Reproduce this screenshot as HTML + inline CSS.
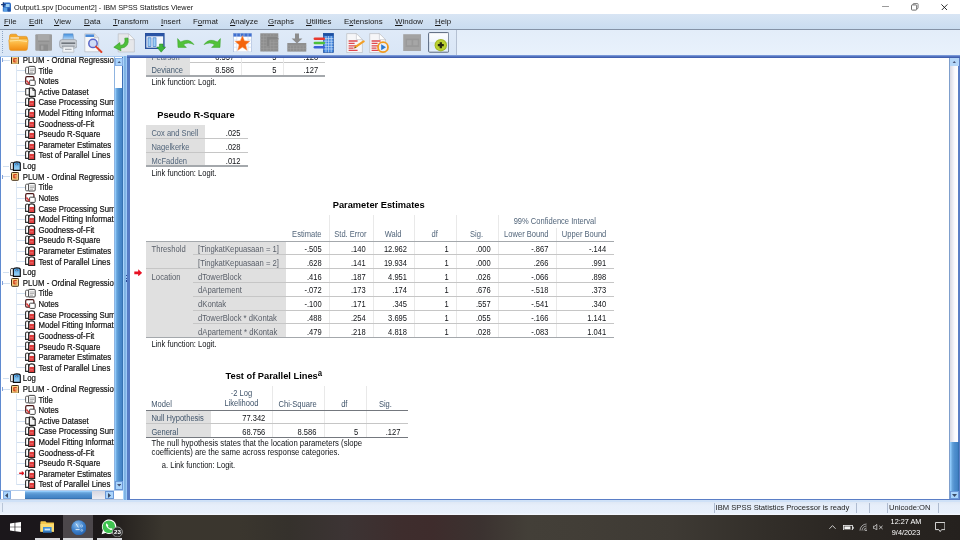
<!DOCTYPE html>
<html><head><meta charset="utf-8"><title>Output1.spv [Document2] - IBM SPSS Statistics Viewer</title>
<style>
*{box-sizing:border-box;margin:0;padding:0}
html,body{width:960px;height:540px;overflow:hidden;background:#fff;font-family:"Liberation Sans",sans-serif}
body{position:relative}
.abs,.abs *{position:absolute}
#title{position:absolute;left:0;top:0;width:960px;height:14px;background:#fff}
#title .t{position:absolute;left:14px;top:3px;font-size:7.3px;line-height:10px;color:#111;white-space:nowrap}
#menu{position:absolute;left:0;top:14px;width:960px;height:15px;background:linear-gradient(#d8e5f4,#c9dcf0)}
#menu span{position:absolute;top:3.1px;font-size:7.9px;line-height:10px;color:#1a1a1a;white-space:nowrap}
#menu u{text-decoration:underline;text-underline-offset:0.5px}
#mline{position:absolute;left:0;top:28.8px;width:960px;height:1.1px;background:#8492a6}
#tool{position:absolute;left:0;top:30px;width:960px;height:26px;background:linear-gradient(#e3edf9,#e9f2fc)}
#tool .tb{position:absolute;left:0;top:0;width:457px;height:26px;background:linear-gradient(#dfeaf8,#d9e6f6);border-right:1px solid #b4c0d2}
#tool svg{position:absolute}
/* left pane */
#lp{position:absolute;left:0;top:56px;width:114px;height:434px;background:#fff;overflow:hidden}
.tr{position:absolute;left:0;height:10px;width:200px;white-space:nowrap}
.tr span{position:absolute;top:1.1px;font-size:7.8px;line-height:10px;color:#111;white-space:nowrap;transform:scaleY(1.1);-webkit-text-stroke:0.18px #111}
.tr .ic{position:absolute;top:0}
.tr .hl{position:absolute;top:4.8px;height:0.9px;background:#d2e0f0}
.vl{position:absolute;left:15.6px;width:0.9px;background:#dde7f3}
#vl{position:absolute;left:16px;top:0;width:1px;height:435px;background:#b5cde3}
#vl0{position:absolute;left:2px;top:0;width:1px;height:435px;background:#b5cde3}
#root{position:absolute;left:0;top:0;width:960px;height:540px;overflow:hidden;will-change:transform;filter:blur(0.35px)}
</style></head><body><div id="root">
<div id="title"><span class="t">Output1.spv [Document2] - IBM SPSS Statistics Viewer</span><svg style="position:absolute;left:1px;top:2px" width="10.4" height="10" viewBox="0 0 10.4 10"><path d="M3.2 0.6H8.4Q10 0.8 10 2.6V9.6H1.8V6z" fill="#2d6cc4"/><path d="M4.6 2H8.6V5H4.6z" fill="#9fd0f4"/><path d="M2.6 5.6H6.4V9.6H2.6z" fill="#5aa0e4"/><path d="M6.6 6.4H9.4V9.6H6.6z" fill="#1f4f9f"/><path d="M2.4 0.3V4.9M0.1 2.6H4.7" stroke="#163a7c" stroke-width="1.3"/></svg>
<svg style="position:absolute;left:882.4px;top:6.2px" width="7" height="1.2" viewBox="0 0 7 1.2"><rect width="7" height="1.1" fill="#9a9a9a"/></svg>
<svg style="position:absolute;left:911px;top:3px" width="7.6" height="7.6" viewBox="0 0 7.6 7.6"><rect x="0.5" y="1.9" width="5.2" height="5.2" rx="0.8" fill="#fff" stroke="#5a5a5a" stroke-width="0.9"/><path d="M2 1.9V1.2Q2 0.5 2.8 0.5H6.4Q7.1 0.5 7.1 1.2V4.8Q7.1 5.6 6.4 5.6H5.8" fill="none" stroke="#6a6a6a" stroke-width="0.8"/></svg>
<svg style="position:absolute;left:940.8px;top:3.6px" width="6.8" height="6.8" viewBox="0 0 6.8 6.8"><path d="M0.4 0.4L6.4 6.4M6.4 0.4L0.4 6.4" stroke="#1a1a1a" stroke-width="0.9"/></svg>
</div>
<div id="menu"><span style="left:4px"><u>F</u>ile</span><span style="left:29px"><u>E</u>dit</span><span style="left:54px"><u>V</u>iew</span><span style="left:84px"><u>D</u>ata</span><span style="left:113px"><u>T</u>ransform</span><span style="left:161px"><u>I</u>nsert</span><span style="left:193px">F<u>o</u>rmat</span><span style="left:230px"><u>A</u>nalyze</span><span style="left:268px"><u>G</u>raphs</span><span style="left:306px"><u>U</u>tilities</span><span style="left:344px">E<u>x</u>tensions</span><span style="left:395px"><u>W</u>indow</span><span style="left:435px"><u>H</u>elp</span>
</div>
<div id="mline"></div>
<div id="tool"><div class="tb"></div><div style="position:absolute;left:2px;top:1px;width:1.4px;height:23px;background:repeating-linear-gradient(#8ea6c6 0,#8ea6c6 1px,transparent 1px,transparent 2.1px)"></div>
<!-- folder -->
<svg style="left:8px;top:3px" width="21" height="19" viewBox="0 0 21 19"><defs><linearGradient id="gf" x1="0" y1="0" x2="0" y2="1"><stop offset="0" stop-color="#fdd26a"/><stop offset="0.45" stop-color="#fbb13a"/><stop offset="1" stop-color="#f08c12"/></linearGradient></defs>
<path d="M1.5 3.2Q1.5 1.2 3.5 1.2H8.2L10 3.4H17.6Q19.4 3.4 19.4 5.2V7H1.5z" fill="#f6a828" stroke="#d98a18" stroke-width="0.6"/>
<path d="M2.4 4.4H11v1.4H2.4z" fill="#fff6dc"/>
<path d="M0.8 7.2Q0.8 6 2.2 6H18.6Q20.2 6 20.1 7.4L19.4 15.8Q19.3 17.4 17.6 17.4H3.2Q1.6 17.4 1.5 15.8z" fill="url(#gf)" stroke="#e09422" stroke-width="0.6"/>
<path d="M2 8Q10 6.4 19 8.6" stroke="#ffe9a8" stroke-width="1" fill="none" opacity="0.8"/>
</svg>
<!-- save (disabled) -->
<svg style="left:34.6px;top:4.2px" width="17.4" height="17" viewBox="0 0 17.4 17"><rect x="0.3" y="0.3" width="16.8" height="16.4" rx="1" fill="#9c9c9c"/><rect x="3" y="0.3" width="11.4" height="6.4" fill="#a9a9a9"/><rect x="3" y="6.7" width="11.4" height="0.9" fill="#8a8a8a"/><rect x="4.4" y="10.4" width="8.6" height="6.3" fill="#8d8d8d"/><rect x="6" y="11.6" width="2.4" height="4.2" fill="#a4a4a4"/></svg>
<!-- print -->
<svg style="left:58.6px;top:2.6px" width="18.6" height="20" viewBox="0 0 18.6 20"><defs><linearGradient id="gp" x1="0" y1="0" x2="0" y2="1"><stop offset="0" stop-color="#3f8fe0"/><stop offset="1" stop-color="#d9ecfb"/></linearGradient></defs>
<path d="M4.6 0.8H14L15 8H3.6z" fill="url(#gp)" stroke="#6d8fb8" stroke-width="0.5"/>
<rect x="0.6" y="6.6" width="17.4" height="8.6" rx="2.6" fill="#c9ced4" stroke="#8a9099" stroke-width="0.6"/>
<rect x="2.4" y="9.4" width="13.8" height="1.6" fill="#6f757c"/>
<rect x="3" y="12.6" width="12.6" height="1.2" fill="#8d939a"/>
<path d="M4.2 13.8H14.4L15 19.2H3.6z" fill="#f4f6f8" stroke="#9aa0a8" stroke-width="0.5"/>
<rect x="6" y="15.8" width="6.6" height="0.9" fill="#8a9099"/>
</svg>
<!-- preview -->
<svg style="left:83.6px;top:2.6px" width="19" height="20" viewBox="0 0 19 20"><path d="M0.8 0.8H10.6L14.6 4.8V18.8H0.8z" fill="#f7f8fa" stroke="#a9b0b8" stroke-width="0.6"/><path d="M10.6 0.8V4.8H14.6" fill="#dfe3e8" stroke="#a9b0b8" stroke-width="0.5"/><rect x="1.4" y="1.4" width="8.6" height="2.6" fill="#4a8ad8"/><circle cx="9" cy="10.4" r="4.2" fill="#cfdcf6" stroke="#5a66c8" stroke-width="1.5"/><path d="M12 13.6L17.4 19" stroke="#e0402a" stroke-width="2" stroke-linecap="round"/></svg>
<!-- export -->
<svg style="left:113.4px;top:2.6px" width="22.6" height="20" viewBox="0 0 22.6 20"><path d="M5.2 0.8H15.6L21.4 6.6V19H5.2z" fill="#e6e7ea" stroke="#b4b7bd" stroke-width="0.6"/><path d="M15.6 0.8V6.6H21.4z" fill="#fafafa" stroke="#b4b7bd" stroke-width="0.5"/><path d="M11.8 5.2Q13.2 12 7.2 12.4L6.8 9.6L0.8 14.2L8 17.8L7.6 15.2Q16.8 14.6 15 5z" fill="#4fbf3a" stroke="#2f9a26" stroke-width="0.6"/></svg>
<!-- dialog recall -->
<svg style="left:144.8px;top:3px" width="21" height="20" viewBox="0 0 21 20"><rect x="0.7" y="0.7" width="18.2" height="14.6" fill="#f4f8fd" stroke="#28509c" stroke-width="1.4"/><rect x="0.7" y="0.7" width="18.2" height="2.6" fill="#2a55a6"/><rect x="3" y="4.8" width="3" height="8.6" fill="#9fd0f6" stroke="#3c74c4" stroke-width="0.7"/><rect x="8" y="4.8" width="3" height="8.6" fill="#9fd0f6" stroke="#3c74c4" stroke-width="0.7"/><path d="M14.4 11H18V14H20.6L16.2 19.2L11.8 14H14.4z" fill="#3fb63a" stroke="#21861f" stroke-width="0.5"/></svg>
<!-- undo -->
<svg style="left:177px;top:8.4px" width="18" height="10" viewBox="0 0 18 10"><path d="M0.6 0.6L1 9.4H9.4L6.4 6.8Q10.6 3.4 17 6.6Q12 -0.6 3.6 4z" fill="#52c23a" stroke="#3aa02c" stroke-width="0.5"/></svg>
<!-- redo -->
<svg style="left:202.6px;top:8.4px" width="18" height="10" viewBox="0 0 18 10"><path d="M17.4 0.6L17 9.4H8.6L11.6 6.8Q7.4 3.4 1 6.6Q6 -0.6 14.4 4z" fill="#52c23a" stroke="#3aa02c" stroke-width="0.5"/></svg>
<!-- goto data star -->
<svg style="left:233.4px;top:2.8px" width="19" height="19.4" viewBox="0 0 19 19.4"><rect x="0.4" y="0.4" width="18.2" height="18.6" fill="#fff" stroke="#9fb4d8" stroke-width="0.6"/><rect x="0.4" y="0.4" width="18.2" height="3.2" fill="#3e6fd0"/><path d="M3.8 0.4v18.6M7.4 0.4v3.2M11 0.4v3.2M15 0.4v18.6M0.4 7h3.4M0.4 10.6h3.4M0.4 14.2h3.4M15 7h3.6M15 10.6h3.6M15 14.2h3.6" stroke="#c8d6f0" stroke-width="0.6"/><path d="M9.4 2.6L11.5 7.8L17 8.2L12.8 11.8L14.2 17.4L9.4 14.3L4.6 17.4L6 11.8L1.8 8.2L7.3 7.8z" fill="#f4640c" stroke="#f8a878" stroke-width="0.5"/></svg>
<!-- grey pivot -->
<svg style="left:259.6px;top:3px" width="19.6" height="19" viewBox="0 0 19.6 19"><rect x="0.3" y="0.3" width="18" height="18.2" fill="#8f8f8f"/><path d="M0.3 3.6h18M0.3 6.6h18M0.3 9.6h18M0.3 12.6h18M0.3 15.6h18M3.6 0.3v18.2M7 0.3v18.2M10.4 0.3v18.2M13.8 0.3v18.2" stroke="#a2a2a2" stroke-width="0.5"/><path d="M6.6 3.4H16.4L18.8 6L16.4 6.8H9.6V13.4H6.6z" fill="#858585" stroke="#9c9c9c" stroke-width="0.4"/></svg>
<!-- grey insert -->
<svg style="left:287px;top:3px" width="19.6" height="19" viewBox="0 0 19.6 19"><path d="M8 0.4H12V5.4H15.4L10 10.6L4.6 5.4H8z" fill="#8d8d8d"/><rect x="0.3" y="10" width="19" height="8.6" fill="#8f8f8f"/><path d="M0.3 12.8h19M0.3 15.6h19M3.4 12.8v5.8M6.6 12.8v5.8M9.8 12.8v5.8M13 12.8v5.8M16.2 12.8v5.8" stroke="#a6a6a6" stroke-width="0.5"/></svg>
<!-- variables -->
<svg style="left:312.6px;top:2.6px" width="21" height="20" viewBox="0 0 21 20"><rect x="10.4" y="0.4" width="10" height="19" fill="#3c82dc" stroke="#1f4f9c" stroke-width="0.7"/><rect x="10.4" y="0.4" width="10" height="2.4" fill="#1d4fa0"/><path d="M13 3v16.4M15.6 3v16.4M18.2 3v16.4M10.4 5.6h10M10.4 8.2h10M10.4 10.8h10M10.4 13.4h10M10.4 16h10" stroke="#cfe3fa" stroke-width="0.7"/><rect x="0.6" y="4.6" width="11.4" height="2.4" rx="1.2" fill="#e8392e"/><rect x="0.6" y="8.8" width="11.4" height="2.4" rx="1.2" fill="#4cc03a"/><rect x="0.6" y="13" width="11.4" height="2.4" rx="1.2" fill="#3c5fd8"/></svg>
<!-- script 1 -->
<svg style="left:345.8px;top:2.6px" width="19" height="20.4" viewBox="0 0 19 20.4"><path d="M0.7 0.6H10.4L16.4 6.6V19.6H0.7z" fill="#f6f6f8" stroke="#b2b5bb" stroke-width="0.6"/><path d="M10.4 0.6V6.6H16.4z" fill="#fff" stroke="#b2b5bb" stroke-width="0.5"/><path d="M2.6 8h9M2.6 10.4h6M2.6 12.8h9M2.6 15.2h5M2.6 17.4h9" stroke="#e0484c" stroke-width="1.3"/><path d="M9.2 14.2L17.6 8.4" stroke="#f2a028" stroke-width="2.2" stroke-linecap="round"/><path d="M7.6 15.6L9.6 13.4L10.4 14.8z" fill="#7a5a2a"/></svg>
<!-- script 2 -->
<svg style="left:369px;top:2.6px" width="21" height="21" viewBox="0 0 21 21"><path d="M0.7 0.6H10.4L16.4 6.6V19.6H0.7z" fill="#f6f6f8" stroke="#b2b5bb" stroke-width="0.6"/><path d="M10.4 0.6V6.6H16.4z" fill="#fff" stroke="#b2b5bb" stroke-width="0.5"/><path d="M2.6 8h9M2.6 10.4h6M2.6 12.8h9M2.6 15.2h5M2.6 17.4h9" stroke="#e0484c" stroke-width="1.3"/><circle cx="14" cy="14.2" r="5" fill="#e8eef8" stroke="#f29a1c" stroke-width="1.8"/><path d="M12.2 11.2L17 14.2L12.2 17.2z" fill="#2a78d0"/></svg>
<!-- grey square -->
<svg style="left:402.6px;top:3.8px" width="18.8" height="17.4" viewBox="0 0 18.8 17.4"><rect x="0.2" y="0.2" width="18.4" height="17" fill="#a3a3a3"/><rect x="2.6" y="4.6" width="13.6" height="8.4" fill="#999"/><rect x="4" y="6.2" width="4.6" height="5" fill="#a6a6a6"/><rect x="10.2" y="6.2" width="4.6" height="5" fill="#a6a6a6"/></svg>
<!-- designate window button -->
<svg style="left:427.6px;top:2.2px" width="21.4" height="20.8" viewBox="0 0 21.4 20.8"><defs><linearGradient id="gb" x1="0" y1="0" x2="0" y2="1"><stop offset="0" stop-color="#fdfeff"/><stop offset="0.45" stop-color="#f2f7fd"/><stop offset="0.5" stop-color="#dbe8f6"/><stop offset="1" stop-color="#e6f0fa"/></linearGradient></defs><rect x="0.6" y="0.6" width="20.2" height="19.6" rx="1" fill="url(#gb)" stroke="#56657c" stroke-width="1"/><circle cx="12.8" cy="13.2" r="6.2" fill="#a2b824"/><circle cx="12.8" cy="13.2" r="5.2" fill="#bcd232"/><path d="M12.8 10.2V16.2M9.8 13.2H15.8" stroke="#26280e" stroke-width="2.3"/></svg>
</div>
<div id="lp">
<div class="tr" style="top:-1.20px"><i class="hl" style="left:3.4px;width:6.4px"></i><i style="position:absolute;left:1.8px;top:3.4px;width:1.1px;height:3.6px;background:#7f9fda"></i><svg class="ic" style="left:10.9px;top:0.7px" width="8.2" height="8.8" viewBox="0 0 8.2 8.8"><rect x="0.5" y="0.5" width="7.2" height="7.8" rx="0.9" fill="#f6d488" stroke="#3e2a12" stroke-width="1"/><rect x="2.1" y="2" width="4" height="4.6" rx="1" fill="#d24a20"/><rect x="3.6" y="3.4" width="2.6" height="1.1" fill="#f8dcae"/><rect x="4.4" y="5.2" width="1.8" height="0.8" fill="#f2b070"/></svg><span style="left:22.8px">PLUM - Ordinal Regression</span></div>
<div class="tr" style="top:9.41px"><i class="hl" style="left:16px;width:9.4px"></i><svg class="ic" style="left:25px" width="11" height="10" viewBox="0 0 11 10"><rect x="0.6" y="2.2" width="5" height="6.6" rx="1" fill="#fff" stroke="#555" stroke-width="1"/><rect x="3.6" y="1.4" width="6.6" height="7.6" rx="1" fill="#fbfbfb" stroke="#444" stroke-width="1"/><path d="M5 4h4M5 5.6h4M5 7.2h3" stroke="#888" stroke-width="0.7"/></svg><span style="left:38.4px">Title</span></div>
<div class="tr" style="top:20.03px"><i class="hl" style="left:16px;width:9.4px"></i><svg class="ic" style="left:25px" width="11" height="10" viewBox="0 0 11 10"><rect x="0.7" y="0.7" width="8.2" height="7.4" rx="1.2" fill="#fff" stroke="#4a1616" stroke-width="1.2"/><rect x="4.6" y="4.2" width="5.6" height="5.2" rx="0.8" fill="#fff" stroke="#444" stroke-width="1"/><path d="M1.5 4.5l3 3.5" stroke="#d33" stroke-width="1.4"/></svg><span style="left:38.4px">Notes</span></div>
<div class="tr" style="top:30.64px"><i class="hl" style="left:16px;width:9.4px"></i><svg class="ic" style="left:25px" width="11" height="10" viewBox="0 0 11 10"><path d="M0.7 1.6h3.6v6.4H0.7z" fill="#fff" stroke="#333" stroke-width="1"/><path d="M4.4 1h3.6l2.2 2.2v6.2H4.4z" fill="#f4f4f4" stroke="#222" stroke-width="1.1"/><path d="M7.8 1v2.4h2.4" fill="none" stroke="#222" stroke-width="0.8"/></svg><span style="left:38.4px">Active Dataset</span></div>
<div class="tr" style="top:41.26px"><i class="hl" style="left:16px;width:9.4px"></i><svg class="ic" style="left:25.4px" width="11" height="10" viewBox="0 0 11 10"><path d="M0.6 8.4V2.6Q0.6 1 2.2 1Q3.8 1 3.8 2.6V8.4z" fill="#fff" stroke="#2e2e2e" stroke-width="1.1"/><path d="M3.8 9.5V3Q3.8 0.9 6.6 0.9Q9.6 0.9 9.6 3V9.5z" fill="#fff" stroke="#1e1e1e" stroke-width="1.25"/><rect x="4.4" y="3.9" width="4.7" height="5.2" fill="#de3a3a"/><path d="M5.2 6.8h3" stroke="#f4a0a0" stroke-width="0.6"/></svg><span style="left:38.4px">Case Processing Summary</span></div>
<div class="tr" style="top:51.88px"><i class="hl" style="left:16px;width:9.4px"></i><svg class="ic" style="left:25.4px" width="11" height="10" viewBox="0 0 11 10"><path d="M0.6 8.4V2.6Q0.6 1 2.2 1Q3.8 1 3.8 2.6V8.4z" fill="#fff" stroke="#2e2e2e" stroke-width="1.1"/><path d="M3.8 9.5V3Q3.8 0.9 6.6 0.9Q9.6 0.9 9.6 3V9.5z" fill="#fff" stroke="#1e1e1e" stroke-width="1.25"/><rect x="4.4" y="3.9" width="4.7" height="5.2" fill="#de3a3a"/><path d="M5.2 6.8h3" stroke="#f4a0a0" stroke-width="0.6"/></svg><span style="left:38.4px">Model Fitting Information</span></div>
<div class="tr" style="top:62.49px"><i class="hl" style="left:16px;width:9.4px"></i><svg class="ic" style="left:25.4px" width="11" height="10" viewBox="0 0 11 10"><path d="M0.6 8.4V2.6Q0.6 1 2.2 1Q3.8 1 3.8 2.6V8.4z" fill="#fff" stroke="#2e2e2e" stroke-width="1.1"/><path d="M3.8 9.5V3Q3.8 0.9 6.6 0.9Q9.6 0.9 9.6 3V9.5z" fill="#fff" stroke="#1e1e1e" stroke-width="1.25"/><rect x="4.4" y="3.9" width="4.7" height="5.2" fill="#de3a3a"/><path d="M5.2 6.8h3" stroke="#f4a0a0" stroke-width="0.6"/></svg><span style="left:38.4px">Goodness-of-Fit</span></div>
<div class="tr" style="top:73.11px"><i class="hl" style="left:16px;width:9.4px"></i><svg class="ic" style="left:25.4px" width="11" height="10" viewBox="0 0 11 10"><path d="M0.6 8.4V2.6Q0.6 1 2.2 1Q3.8 1 3.8 2.6V8.4z" fill="#fff" stroke="#2e2e2e" stroke-width="1.1"/><path d="M3.8 9.5V3Q3.8 0.9 6.6 0.9Q9.6 0.9 9.6 3V9.5z" fill="#fff" stroke="#1e1e1e" stroke-width="1.25"/><rect x="4.4" y="3.9" width="4.7" height="5.2" fill="#de3a3a"/><path d="M5.2 6.8h3" stroke="#f4a0a0" stroke-width="0.6"/></svg><span style="left:38.4px">Pseudo R-Square</span></div>
<div class="tr" style="top:83.72px"><i class="hl" style="left:16px;width:9.4px"></i><svg class="ic" style="left:25.4px" width="11" height="10" viewBox="0 0 11 10"><path d="M0.6 8.4V2.6Q0.6 1 2.2 1Q3.8 1 3.8 2.6V8.4z" fill="#fff" stroke="#2e2e2e" stroke-width="1.1"/><path d="M3.8 9.5V3Q3.8 0.9 6.6 0.9Q9.6 0.9 9.6 3V9.5z" fill="#fff" stroke="#1e1e1e" stroke-width="1.25"/><rect x="4.4" y="3.9" width="4.7" height="5.2" fill="#de3a3a"/><path d="M5.2 6.8h3" stroke="#f4a0a0" stroke-width="0.6"/></svg><span style="left:38.4px">Parameter Estimates</span></div>
<div class="tr" style="top:94.33px"><i class="hl" style="left:16px;width:9.4px"></i><svg class="ic" style="left:25.4px" width="11" height="10" viewBox="0 0 11 10"><path d="M0.6 8.4V2.6Q0.6 1 2.2 1Q3.8 1 3.8 2.6V8.4z" fill="#fff" stroke="#2e2e2e" stroke-width="1.1"/><path d="M3.8 9.5V3Q3.8 0.9 6.6 0.9Q9.6 0.9 9.6 3V9.5z" fill="#fff" stroke="#1e1e1e" stroke-width="1.25"/><rect x="4.4" y="3.9" width="4.7" height="5.2" fill="#de3a3a"/><path d="M5.2 6.8h3" stroke="#f4a0a0" stroke-width="0.6"/></svg><span style="left:38.4px">Test of Parallel Lines</span></div>
<i class="vl" style="top:9.30px;height:90.53px"></i>
<div class="tr" style="top:104.95px"><i class="hl" style="left:2.6px;width:6px"></i><svg class="ic" style="left:9.6px;top:0.2px" width="11" height="10" viewBox="0 0 11 10"><defs><linearGradient id="lg" x1="0" y1="0" x2="0" y2="1"><stop offset="0" stop-color="#4aa6ea"/><stop offset="1" stop-color="#a6d8f8"/></linearGradient></defs><path d="M0.6 8.6V2.8Q0.6 1.3 2 1.3Q3.4 1.3 3.4 2.8V8.6z" fill="#fff" stroke="#3a3a3a" stroke-width="0.9"/><path d="M3.4 9.4V2.6Q3.4 0.9 6.8 0.9Q10.3 0.9 10.3 2.6V9.4z" fill="url(#lg)" stroke="#0c0c10" stroke-width="1.1"/><rect x="5.6" y="2.6" width="2.6" height="1.5" fill="#17386a"/><rect x="6.2" y="3" width="1.3" height="0.7" fill="#e8f4fc"/></svg><span style="left:22.8px">Log</span></div>
<div class="tr" style="top:115.56px"><i class="hl" style="left:3.4px;width:6.4px"></i><i style="position:absolute;left:1.8px;top:3.4px;width:1.1px;height:3.6px;background:#7f9fda"></i><svg class="ic" style="left:10.9px;top:0.7px" width="8.2" height="8.8" viewBox="0 0 8.2 8.8"><rect x="0.5" y="0.5" width="7.2" height="7.8" rx="0.9" fill="#f6d488" stroke="#3e2a12" stroke-width="1"/><rect x="2.1" y="2" width="4" height="4.6" rx="1" fill="#d24a20"/><rect x="3.6" y="3.4" width="2.6" height="1.1" fill="#f8dcae"/><rect x="4.4" y="5.2" width="1.8" height="0.8" fill="#f2b070"/></svg><span style="left:22.8px">PLUM - Ordinal Regression</span></div>
<div class="tr" style="top:126.18px"><i class="hl" style="left:16px;width:9.4px"></i><svg class="ic" style="left:25px" width="11" height="10" viewBox="0 0 11 10"><rect x="0.6" y="2.2" width="5" height="6.6" rx="1" fill="#fff" stroke="#555" stroke-width="1"/><rect x="3.6" y="1.4" width="6.6" height="7.6" rx="1" fill="#fbfbfb" stroke="#444" stroke-width="1"/><path d="M5 4h4M5 5.6h4M5 7.2h3" stroke="#888" stroke-width="0.7"/></svg><span style="left:38.4px">Title</span></div>
<div class="tr" style="top:136.80px"><i class="hl" style="left:16px;width:9.4px"></i><svg class="ic" style="left:25px" width="11" height="10" viewBox="0 0 11 10"><rect x="0.7" y="0.7" width="8.2" height="7.4" rx="1.2" fill="#fff" stroke="#4a1616" stroke-width="1.2"/><rect x="4.6" y="4.2" width="5.6" height="5.2" rx="0.8" fill="#fff" stroke="#444" stroke-width="1"/><path d="M1.5 4.5l3 3.5" stroke="#d33" stroke-width="1.4"/></svg><span style="left:38.4px">Notes</span></div>
<div class="tr" style="top:147.41px"><i class="hl" style="left:16px;width:9.4px"></i><svg class="ic" style="left:25.4px" width="11" height="10" viewBox="0 0 11 10"><path d="M0.6 8.4V2.6Q0.6 1 2.2 1Q3.8 1 3.8 2.6V8.4z" fill="#fff" stroke="#2e2e2e" stroke-width="1.1"/><path d="M3.8 9.5V3Q3.8 0.9 6.6 0.9Q9.6 0.9 9.6 3V9.5z" fill="#fff" stroke="#1e1e1e" stroke-width="1.25"/><rect x="4.4" y="3.9" width="4.7" height="5.2" fill="#de3a3a"/><path d="M5.2 6.8h3" stroke="#f4a0a0" stroke-width="0.6"/></svg><span style="left:38.4px">Case Processing Summary</span></div>
<div class="tr" style="top:158.02px"><i class="hl" style="left:16px;width:9.4px"></i><svg class="ic" style="left:25.4px" width="11" height="10" viewBox="0 0 11 10"><path d="M0.6 8.4V2.6Q0.6 1 2.2 1Q3.8 1 3.8 2.6V8.4z" fill="#fff" stroke="#2e2e2e" stroke-width="1.1"/><path d="M3.8 9.5V3Q3.8 0.9 6.6 0.9Q9.6 0.9 9.6 3V9.5z" fill="#fff" stroke="#1e1e1e" stroke-width="1.25"/><rect x="4.4" y="3.9" width="4.7" height="5.2" fill="#de3a3a"/><path d="M5.2 6.8h3" stroke="#f4a0a0" stroke-width="0.6"/></svg><span style="left:38.4px">Model Fitting Information</span></div>
<div class="tr" style="top:168.64px"><i class="hl" style="left:16px;width:9.4px"></i><svg class="ic" style="left:25.4px" width="11" height="10" viewBox="0 0 11 10"><path d="M0.6 8.4V2.6Q0.6 1 2.2 1Q3.8 1 3.8 2.6V8.4z" fill="#fff" stroke="#2e2e2e" stroke-width="1.1"/><path d="M3.8 9.5V3Q3.8 0.9 6.6 0.9Q9.6 0.9 9.6 3V9.5z" fill="#fff" stroke="#1e1e1e" stroke-width="1.25"/><rect x="4.4" y="3.9" width="4.7" height="5.2" fill="#de3a3a"/><path d="M5.2 6.8h3" stroke="#f4a0a0" stroke-width="0.6"/></svg><span style="left:38.4px">Goodness-of-Fit</span></div>
<div class="tr" style="top:179.25px"><i class="hl" style="left:16px;width:9.4px"></i><svg class="ic" style="left:25.4px" width="11" height="10" viewBox="0 0 11 10"><path d="M0.6 8.4V2.6Q0.6 1 2.2 1Q3.8 1 3.8 2.6V8.4z" fill="#fff" stroke="#2e2e2e" stroke-width="1.1"/><path d="M3.8 9.5V3Q3.8 0.9 6.6 0.9Q9.6 0.9 9.6 3V9.5z" fill="#fff" stroke="#1e1e1e" stroke-width="1.25"/><rect x="4.4" y="3.9" width="4.7" height="5.2" fill="#de3a3a"/><path d="M5.2 6.8h3" stroke="#f4a0a0" stroke-width="0.6"/></svg><span style="left:38.4px">Pseudo R-Square</span></div>
<div class="tr" style="top:189.87px"><i class="hl" style="left:16px;width:9.4px"></i><svg class="ic" style="left:25.4px" width="11" height="10" viewBox="0 0 11 10"><path d="M0.6 8.4V2.6Q0.6 1 2.2 1Q3.8 1 3.8 2.6V8.4z" fill="#fff" stroke="#2e2e2e" stroke-width="1.1"/><path d="M3.8 9.5V3Q3.8 0.9 6.6 0.9Q9.6 0.9 9.6 3V9.5z" fill="#fff" stroke="#1e1e1e" stroke-width="1.25"/><rect x="4.4" y="3.9" width="4.7" height="5.2" fill="#de3a3a"/><path d="M5.2 6.8h3" stroke="#f4a0a0" stroke-width="0.6"/></svg><span style="left:38.4px">Parameter Estimates</span></div>
<div class="tr" style="top:200.49px"><i class="hl" style="left:16px;width:9.4px"></i><svg class="ic" style="left:25.4px" width="11" height="10" viewBox="0 0 11 10"><path d="M0.6 8.4V2.6Q0.6 1 2.2 1Q3.8 1 3.8 2.6V8.4z" fill="#fff" stroke="#2e2e2e" stroke-width="1.1"/><path d="M3.8 9.5V3Q3.8 0.9 6.6 0.9Q9.6 0.9 9.6 3V9.5z" fill="#fff" stroke="#1e1e1e" stroke-width="1.25"/><rect x="4.4" y="3.9" width="4.7" height="5.2" fill="#de3a3a"/><path d="M5.2 6.8h3" stroke="#f4a0a0" stroke-width="0.6"/></svg><span style="left:38.4px">Test of Parallel Lines</span></div>
<i class="vl" style="top:126.06px;height:79.92px"></i>
<div class="tr" style="top:211.10px"><i class="hl" style="left:2.6px;width:6px"></i><svg class="ic" style="left:9.6px;top:0.2px" width="11" height="10" viewBox="0 0 11 10"><defs><linearGradient id="lg" x1="0" y1="0" x2="0" y2="1"><stop offset="0" stop-color="#4aa6ea"/><stop offset="1" stop-color="#a6d8f8"/></linearGradient></defs><path d="M0.6 8.6V2.8Q0.6 1.3 2 1.3Q3.4 1.3 3.4 2.8V8.6z" fill="#fff" stroke="#3a3a3a" stroke-width="0.9"/><path d="M3.4 9.4V2.6Q3.4 0.9 6.8 0.9Q10.3 0.9 10.3 2.6V9.4z" fill="url(#lg)" stroke="#0c0c10" stroke-width="1.1"/><rect x="5.6" y="2.6" width="2.6" height="1.5" fill="#17386a"/><rect x="6.2" y="3" width="1.3" height="0.7" fill="#e8f4fc"/></svg><span style="left:22.8px">Log</span></div>
<div class="tr" style="top:221.71px"><i class="hl" style="left:3.4px;width:6.4px"></i><i style="position:absolute;left:1.8px;top:3.4px;width:1.1px;height:3.6px;background:#7f9fda"></i><svg class="ic" style="left:10.9px;top:0.7px" width="8.2" height="8.8" viewBox="0 0 8.2 8.8"><rect x="0.5" y="0.5" width="7.2" height="7.8" rx="0.9" fill="#f6d488" stroke="#3e2a12" stroke-width="1"/><rect x="2.1" y="2" width="4" height="4.6" rx="1" fill="#d24a20"/><rect x="3.6" y="3.4" width="2.6" height="1.1" fill="#f8dcae"/><rect x="4.4" y="5.2" width="1.8" height="0.8" fill="#f2b070"/></svg><span style="left:22.8px">PLUM - Ordinal Regression</span></div>
<div class="tr" style="top:232.33px"><i class="hl" style="left:16px;width:9.4px"></i><svg class="ic" style="left:25px" width="11" height="10" viewBox="0 0 11 10"><rect x="0.6" y="2.2" width="5" height="6.6" rx="1" fill="#fff" stroke="#555" stroke-width="1"/><rect x="3.6" y="1.4" width="6.6" height="7.6" rx="1" fill="#fbfbfb" stroke="#444" stroke-width="1"/><path d="M5 4h4M5 5.6h4M5 7.2h3" stroke="#888" stroke-width="0.7"/></svg><span style="left:38.4px">Title</span></div>
<div class="tr" style="top:242.94px"><i class="hl" style="left:16px;width:9.4px"></i><svg class="ic" style="left:25px" width="11" height="10" viewBox="0 0 11 10"><rect x="0.7" y="0.7" width="8.2" height="7.4" rx="1.2" fill="#fff" stroke="#4a1616" stroke-width="1.2"/><rect x="4.6" y="4.2" width="5.6" height="5.2" rx="0.8" fill="#fff" stroke="#444" stroke-width="1"/><path d="M1.5 4.5l3 3.5" stroke="#d33" stroke-width="1.4"/></svg><span style="left:38.4px">Notes</span></div>
<div class="tr" style="top:253.56px"><i class="hl" style="left:16px;width:9.4px"></i><svg class="ic" style="left:25.4px" width="11" height="10" viewBox="0 0 11 10"><path d="M0.6 8.4V2.6Q0.6 1 2.2 1Q3.8 1 3.8 2.6V8.4z" fill="#fff" stroke="#2e2e2e" stroke-width="1.1"/><path d="M3.8 9.5V3Q3.8 0.9 6.6 0.9Q9.6 0.9 9.6 3V9.5z" fill="#fff" stroke="#1e1e1e" stroke-width="1.25"/><rect x="4.4" y="3.9" width="4.7" height="5.2" fill="#de3a3a"/><path d="M5.2 6.8h3" stroke="#f4a0a0" stroke-width="0.6"/></svg><span style="left:38.4px">Case Processing Summary</span></div>
<div class="tr" style="top:264.18px"><i class="hl" style="left:16px;width:9.4px"></i><svg class="ic" style="left:25.4px" width="11" height="10" viewBox="0 0 11 10"><path d="M0.6 8.4V2.6Q0.6 1 2.2 1Q3.8 1 3.8 2.6V8.4z" fill="#fff" stroke="#2e2e2e" stroke-width="1.1"/><path d="M3.8 9.5V3Q3.8 0.9 6.6 0.9Q9.6 0.9 9.6 3V9.5z" fill="#fff" stroke="#1e1e1e" stroke-width="1.25"/><rect x="4.4" y="3.9" width="4.7" height="5.2" fill="#de3a3a"/><path d="M5.2 6.8h3" stroke="#f4a0a0" stroke-width="0.6"/></svg><span style="left:38.4px">Model Fitting Information</span></div>
<div class="tr" style="top:274.79px"><i class="hl" style="left:16px;width:9.4px"></i><svg class="ic" style="left:25.4px" width="11" height="10" viewBox="0 0 11 10"><path d="M0.6 8.4V2.6Q0.6 1 2.2 1Q3.8 1 3.8 2.6V8.4z" fill="#fff" stroke="#2e2e2e" stroke-width="1.1"/><path d="M3.8 9.5V3Q3.8 0.9 6.6 0.9Q9.6 0.9 9.6 3V9.5z" fill="#fff" stroke="#1e1e1e" stroke-width="1.25"/><rect x="4.4" y="3.9" width="4.7" height="5.2" fill="#de3a3a"/><path d="M5.2 6.8h3" stroke="#f4a0a0" stroke-width="0.6"/></svg><span style="left:38.4px">Goodness-of-Fit</span></div>
<div class="tr" style="top:285.41px"><i class="hl" style="left:16px;width:9.4px"></i><svg class="ic" style="left:25.4px" width="11" height="10" viewBox="0 0 11 10"><path d="M0.6 8.4V2.6Q0.6 1 2.2 1Q3.8 1 3.8 2.6V8.4z" fill="#fff" stroke="#2e2e2e" stroke-width="1.1"/><path d="M3.8 9.5V3Q3.8 0.9 6.6 0.9Q9.6 0.9 9.6 3V9.5z" fill="#fff" stroke="#1e1e1e" stroke-width="1.25"/><rect x="4.4" y="3.9" width="4.7" height="5.2" fill="#de3a3a"/><path d="M5.2 6.8h3" stroke="#f4a0a0" stroke-width="0.6"/></svg><span style="left:38.4px">Pseudo R-Square</span></div>
<div class="tr" style="top:296.02px"><i class="hl" style="left:16px;width:9.4px"></i><svg class="ic" style="left:25.4px" width="11" height="10" viewBox="0 0 11 10"><path d="M0.6 8.4V2.6Q0.6 1 2.2 1Q3.8 1 3.8 2.6V8.4z" fill="#fff" stroke="#2e2e2e" stroke-width="1.1"/><path d="M3.8 9.5V3Q3.8 0.9 6.6 0.9Q9.6 0.9 9.6 3V9.5z" fill="#fff" stroke="#1e1e1e" stroke-width="1.25"/><rect x="4.4" y="3.9" width="4.7" height="5.2" fill="#de3a3a"/><path d="M5.2 6.8h3" stroke="#f4a0a0" stroke-width="0.6"/></svg><span style="left:38.4px">Parameter Estimates</span></div>
<div class="tr" style="top:306.63px"><i class="hl" style="left:16px;width:9.4px"></i><svg class="ic" style="left:25.4px" width="11" height="10" viewBox="0 0 11 10"><path d="M0.6 8.4V2.6Q0.6 1 2.2 1Q3.8 1 3.8 2.6V8.4z" fill="#fff" stroke="#2e2e2e" stroke-width="1.1"/><path d="M3.8 9.5V3Q3.8 0.9 6.6 0.9Q9.6 0.9 9.6 3V9.5z" fill="#fff" stroke="#1e1e1e" stroke-width="1.25"/><rect x="4.4" y="3.9" width="4.7" height="5.2" fill="#de3a3a"/><path d="M5.2 6.8h3" stroke="#f4a0a0" stroke-width="0.6"/></svg><span style="left:38.4px">Test of Parallel Lines</span></div>
<i class="vl" style="top:232.21px;height:79.92px"></i>
<div class="tr" style="top:317.25px"><i class="hl" style="left:2.6px;width:6px"></i><svg class="ic" style="left:9.6px;top:0.2px" width="11" height="10" viewBox="0 0 11 10"><defs><linearGradient id="lg" x1="0" y1="0" x2="0" y2="1"><stop offset="0" stop-color="#4aa6ea"/><stop offset="1" stop-color="#a6d8f8"/></linearGradient></defs><path d="M0.6 8.6V2.8Q0.6 1.3 2 1.3Q3.4 1.3 3.4 2.8V8.6z" fill="#fff" stroke="#3a3a3a" stroke-width="0.9"/><path d="M3.4 9.4V2.6Q3.4 0.9 6.8 0.9Q10.3 0.9 10.3 2.6V9.4z" fill="url(#lg)" stroke="#0c0c10" stroke-width="1.1"/><rect x="5.6" y="2.6" width="2.6" height="1.5" fill="#17386a"/><rect x="6.2" y="3" width="1.3" height="0.7" fill="#e8f4fc"/></svg><span style="left:22.8px">Log</span></div>
<div class="tr" style="top:327.87px"><i class="hl" style="left:3.4px;width:6.4px"></i><i style="position:absolute;left:1.8px;top:3.4px;width:1.1px;height:3.6px;background:#7f9fda"></i><svg class="ic" style="left:10.9px;top:0.7px" width="8.2" height="8.8" viewBox="0 0 8.2 8.8"><rect x="0.5" y="0.5" width="7.2" height="7.8" rx="0.9" fill="#f6d488" stroke="#3e2a12" stroke-width="1"/><rect x="2.1" y="2" width="4" height="4.6" rx="1" fill="#d24a20"/><rect x="3.6" y="3.4" width="2.6" height="1.1" fill="#f8dcae"/><rect x="4.4" y="5.2" width="1.8" height="0.8" fill="#f2b070"/></svg><span style="left:22.8px">PLUM - Ordinal Regression</span></div>
<div class="tr" style="top:338.48px"><i class="hl" style="left:16px;width:9.4px"></i><svg class="ic" style="left:25px" width="11" height="10" viewBox="0 0 11 10"><rect x="0.6" y="2.2" width="5" height="6.6" rx="1" fill="#fff" stroke="#555" stroke-width="1"/><rect x="3.6" y="1.4" width="6.6" height="7.6" rx="1" fill="#fbfbfb" stroke="#444" stroke-width="1"/><path d="M5 4h4M5 5.6h4M5 7.2h3" stroke="#888" stroke-width="0.7"/></svg><span style="left:38.4px">Title</span></div>
<div class="tr" style="top:349.10px"><i class="hl" style="left:16px;width:9.4px"></i><svg class="ic" style="left:25px" width="11" height="10" viewBox="0 0 11 10"><rect x="0.7" y="0.7" width="8.2" height="7.4" rx="1.2" fill="#fff" stroke="#4a1616" stroke-width="1.2"/><rect x="4.6" y="4.2" width="5.6" height="5.2" rx="0.8" fill="#fff" stroke="#444" stroke-width="1"/><path d="M1.5 4.5l3 3.5" stroke="#d33" stroke-width="1.4"/></svg><span style="left:38.4px">Notes</span></div>
<div class="tr" style="top:359.71px"><i class="hl" style="left:16px;width:9.4px"></i><svg class="ic" style="left:25px" width="11" height="10" viewBox="0 0 11 10"><path d="M0.7 1.6h3.6v6.4H0.7z" fill="#fff" stroke="#333" stroke-width="1"/><path d="M4.4 1h3.6l2.2 2.2v6.2H4.4z" fill="#f4f4f4" stroke="#222" stroke-width="1.1"/><path d="M7.8 1v2.4h2.4" fill="none" stroke="#222" stroke-width="0.8"/></svg><span style="left:38.4px">Active Dataset</span></div>
<div class="tr" style="top:370.33px"><i class="hl" style="left:16px;width:9.4px"></i><svg class="ic" style="left:25.4px" width="11" height="10" viewBox="0 0 11 10"><path d="M0.6 8.4V2.6Q0.6 1 2.2 1Q3.8 1 3.8 2.6V8.4z" fill="#fff" stroke="#2e2e2e" stroke-width="1.1"/><path d="M3.8 9.5V3Q3.8 0.9 6.6 0.9Q9.6 0.9 9.6 3V9.5z" fill="#fff" stroke="#1e1e1e" stroke-width="1.25"/><rect x="4.4" y="3.9" width="4.7" height="5.2" fill="#de3a3a"/><path d="M5.2 6.8h3" stroke="#f4a0a0" stroke-width="0.6"/></svg><span style="left:38.4px">Case Processing Summary</span></div>
<div class="tr" style="top:380.94px"><i class="hl" style="left:16px;width:9.4px"></i><svg class="ic" style="left:25.4px" width="11" height="10" viewBox="0 0 11 10"><path d="M0.6 8.4V2.6Q0.6 1 2.2 1Q3.8 1 3.8 2.6V8.4z" fill="#fff" stroke="#2e2e2e" stroke-width="1.1"/><path d="M3.8 9.5V3Q3.8 0.9 6.6 0.9Q9.6 0.9 9.6 3V9.5z" fill="#fff" stroke="#1e1e1e" stroke-width="1.25"/><rect x="4.4" y="3.9" width="4.7" height="5.2" fill="#de3a3a"/><path d="M5.2 6.8h3" stroke="#f4a0a0" stroke-width="0.6"/></svg><span style="left:38.4px">Model Fitting Information</span></div>
<div class="tr" style="top:391.56px"><i class="hl" style="left:16px;width:9.4px"></i><svg class="ic" style="left:25.4px" width="11" height="10" viewBox="0 0 11 10"><path d="M0.6 8.4V2.6Q0.6 1 2.2 1Q3.8 1 3.8 2.6V8.4z" fill="#fff" stroke="#2e2e2e" stroke-width="1.1"/><path d="M3.8 9.5V3Q3.8 0.9 6.6 0.9Q9.6 0.9 9.6 3V9.5z" fill="#fff" stroke="#1e1e1e" stroke-width="1.25"/><rect x="4.4" y="3.9" width="4.7" height="5.2" fill="#de3a3a"/><path d="M5.2 6.8h3" stroke="#f4a0a0" stroke-width="0.6"/></svg><span style="left:38.4px">Goodness-of-Fit</span></div>
<div class="tr" style="top:402.17px"><i class="hl" style="left:16px;width:9.4px"></i><svg class="ic" style="left:25.4px" width="11" height="10" viewBox="0 0 11 10"><path d="M0.6 8.4V2.6Q0.6 1 2.2 1Q3.8 1 3.8 2.6V8.4z" fill="#fff" stroke="#2e2e2e" stroke-width="1.1"/><path d="M3.8 9.5V3Q3.8 0.9 6.6 0.9Q9.6 0.9 9.6 3V9.5z" fill="#fff" stroke="#1e1e1e" stroke-width="1.25"/><rect x="4.4" y="3.9" width="4.7" height="5.2" fill="#de3a3a"/><path d="M5.2 6.8h3" stroke="#f4a0a0" stroke-width="0.6"/></svg><span style="left:38.4px">Pseudo R-Square</span></div>
<div class="tr" style="top:412.79px"><i class="hl" style="left:16px;width:9.4px"></i><svg class="ic" style="left:25.4px" width="11" height="10" viewBox="0 0 11 10"><path d="M0.6 8.4V2.6Q0.6 1 2.2 1Q3.8 1 3.8 2.6V8.4z" fill="#fff" stroke="#2e2e2e" stroke-width="1.1"/><path d="M3.8 9.5V3Q3.8 0.9 6.6 0.9Q9.6 0.9 9.6 3V9.5z" fill="#fff" stroke="#1e1e1e" stroke-width="1.25"/><rect x="4.4" y="3.9" width="4.7" height="5.2" fill="#de3a3a"/><path d="M5.2 6.8h3" stroke="#f4a0a0" stroke-width="0.6"/></svg><svg style="position:absolute;left:18.6px;top:2.3px" width="5.8" height="4.6" viewBox="0 0 5.8 4.6"><path d="M0.2 1.5H2.8V0.1L5.6 2.3L2.8 4.5V3.1H0.2z" fill="#e0121c"/></svg><span style="left:38.4px">Parameter Estimates</span></div>
<div class="tr" style="top:423.40px"><i class="hl" style="left:16px;width:9.4px"></i><svg class="ic" style="left:25.4px" width="11" height="10" viewBox="0 0 11 10"><path d="M0.6 8.4V2.6Q0.6 1 2.2 1Q3.8 1 3.8 2.6V8.4z" fill="#fff" stroke="#2e2e2e" stroke-width="1.1"/><path d="M3.8 9.5V3Q3.8 0.9 6.6 0.9Q9.6 0.9 9.6 3V9.5z" fill="#fff" stroke="#1e1e1e" stroke-width="1.25"/><rect x="4.4" y="3.9" width="4.7" height="5.2" fill="#de3a3a"/><path d="M5.2 6.8h3" stroke="#f4a0a0" stroke-width="0.6"/></svg><span style="left:38.4px">Test of Parallel Lines</span></div>
<i class="vl" style="top:338.37px;height:90.54px"></i>
</div>
<div id="lsb" style="position:absolute;left:114px;top:56px;width:9px;height:434px;background:#fff;border-left:0.6px solid #8fb4e0;border-right:0.7px solid #3d6fb5">
 <div style="position:absolute;left:0;top:1.6px;width:8px;height:8.6px;background:#aad4fb;border:0.6px solid #86aee4"></div>
 <svg style="position:absolute;left:1.8px;top:4.8px" width="4.4" height="2.6" viewBox="0 0 5 3"><path d="M0 3L2.5 0L5 3z" fill="#46567a"/></svg>
 <div style="position:absolute;left:0;top:32px;width:8px;height:392.6px;background:linear-gradient(90deg,#92ccfc 0,#8cc6f8 13%,#6aa6dc 20%,#4f8fce 50%,#4484c6 82%,#2f6aa8 100%)"></div>
 <div style="position:absolute;left:0;top:424.6px;width:8px;height:9.2px;background:#aad4fb;border:0.6px solid #6a98d8"></div>
 <svg style="position:absolute;left:1.8px;top:428px" width="4.4" height="2.6" viewBox="0 0 5 3"><path d="M0 0L2.5 3L5 0z" fill="#46567a"/></svg>
</div>
<div id="lhs" style="position:absolute;left:0;top:490px;width:123px;height:9.3px;background:#fff;border-top:0.5px solid #b4cdec">
 <div style="position:absolute;left:2.6px;top:0;width:8.6px;height:8.4px;background:#aad4fb;border:0.6px solid #86aee4"></div>
 <svg style="position:absolute;left:5px;top:1.5px" width="3" height="5" viewBox="0 0 3 5"><path d="M3 0L0 2.5L3 5z" fill="#3a4a66"/></svg>
 <div style="position:absolute;left:25px;top:0;width:67px;height:8.4px;background:linear-gradient(#92ccfc 0,#8cc6f8 13%,#6aa6dc 20%,#4f8fce 50%,#4484c6 82%,#2f6aa8 100%)"></div>
 <div style="position:absolute;left:92px;top:0;width:12.6px;height:8.4px;background:linear-gradient(#d6d6e0,#eeeef4)"></div>
 <div style="position:absolute;left:104.6px;top:0;width:9px;height:8.4px;background:#aad4fb;border:0.6px solid #6a98d8"></div>
 <svg style="position:absolute;left:107.5px;top:1.5px" width="3" height="5" viewBox="0 0 3 5"><path d="M0 0L3 2.5L0 5z" fill="#3a4a66"/></svg>
</div>
<div style="position:absolute;left:0;top:56px;width:1.3px;height:444px;background:#5f8ad0"></div>
<div style="position:absolute;left:0;top:499.2px;width:127px;height:1.4px;background:#b6c4da"></div>
<div style="position:absolute;left:0;top:500.3px;width:960px;height:2.2px;background:#cfe1f7"></div>
<!-- splitter -->
<div style="position:absolute;left:122.8px;top:56px;width:4.5px;height:444px;background:linear-gradient(90deg,#a8d4fc 0,#a8d4fc 30%,#7eb2e2 31%,#82b6e6 85%,#9ccaf8 86%)"></div>
<div style="position:absolute;left:125.6px;top:275px;width:1.2px;height:8px;background:repeating-linear-gradient(#2a4a9a 0,#2a4a9a 1.4px,transparent 1.4px,transparent 2.7px)"></div>
<!-- content frame -->
<div id="cf" style="position:absolute;left:126.6px;top:55.6px;width:833.4px;height:444.6px;background:#fff;border:solid #5a7ec6;border-width:2.2px 2px 1.6px 3.2px;border-left-color:#577cc4"></div>
<div style="position:absolute;left:126.6px;top:55.4px;width:833.4px;height:2.4px;background:linear-gradient(#8aa8e2,#5474c0 50%,#3856a6)"></div>
<div style="position:absolute;left:0;top:55.8px;width:123px;height:1.6px;background:#a9c9f0"></div>
<div id="rsb" style="position:absolute;left:949px;top:57.6px;width:9px;height:441.4px;background:linear-gradient(90deg,#d8d8e2,#fafaff 60%,#fff);border-left:0.7px solid #7f9fcc">
 <div style="position:absolute;left:0;top:0;width:9px;height:8.8px;background:#b4d6f8"></div>
 <svg style="position:absolute;left:2.2px;top:3.2px" width="4.6" height="2.6" viewBox="0 0 5 3"><path d="M0 3L2.5 0L5 3z" fill="#46567a"/></svg>
 <div style="position:absolute;left:0;top:384px;width:9px;height:49.6px;background:linear-gradient(90deg,#92ccfc 0,#8cc6f8 13%,#6aa6dc 20%,#4f8fce 50%,#4484c6 82%,#2f6aa8 100%)"></div>
 <div style="position:absolute;left:0;top:433.4px;width:9px;height:8px;background:#aad4fb;border:0.6px solid #6a98d8"></div>
 <svg style="position:absolute;left:2px;top:436px" width="5" height="3" viewBox="0 0 5 3"><path d="M0 0L2.5 3L5 0z" fill="#3a4a66"/></svg>
</div>

<style>#ct{position:absolute;left:0;top:0;width:960px;height:540px;clip-path:inset(57.8px 11px 41px 129.8px)}#ct i,#ct b,#ct svg{position:absolute;display:block}#ct b{transform:scaleY(1.08);transform-origin:50% 50%;font-weight:normal;line-height:10px;white-space:nowrap;height:10px}</style><div id="ct"><i style="left:146.30px;top:57.80px;width:43.70px;height:18.40px;background:#e0e0e0"></i>
<i style="left:190.00px;top:61.90px;width:135.40px;height:0.70px;background:#c6c6c6"></i>
<i style="left:241.15px;top:57.80px;width:0.70px;height:18.40px;background:#e9e9e9"></i>
<i style="left:282.95px;top:57.80px;width:0.70px;height:18.40px;background:#e9e9e9"></i>
<i style="left:146.30px;top:75.28px;width:179.10px;height:1.25px;background:#a4a8ac"></i>
<b style="top:53px;color:#52657a;font-size:7.55px;left:151.50px;">Pearson</b>
<b style="top:53px;color:#101216;font-size:7.55px;right:725.80px;text-align:right;">8.557</b>
<b style="top:53px;color:#101216;font-size:7.55px;right:683.50px;text-align:right;">5</b>
<b style="top:53px;color:#101216;font-size:7.55px;right:641.90px;text-align:right;">.128</b>
<b style="top:66px;color:#445a70;font-size:7.55px;left:151.50px;">Deviance</b>
<b style="top:66px;color:#101216;font-size:7.55px;right:725.80px;text-align:right;">8.586</b>
<b style="top:66px;color:#101216;font-size:7.55px;right:683.50px;text-align:right;">5</b>
<b style="top:66px;color:#101216;font-size:7.55px;right:641.90px;text-align:right;">.127</b>
<b style="top:78px;color:#101216;font-size:7.55px;left:151.50px;">Link function: Logit.</b>
<b style="top:110px;color:#000;font-size:9.30px;font-weight:bold;transform:scaleY(1.06);left:96.00px;width:200px;text-align:center;">Pseudo R-Square</b>
<i style="left:146.30px;top:124.70px;width:59.20px;height:41.30px;background:#e0e0e0"></i>
<i style="left:146.30px;top:138.35px;width:102.00px;height:0.70px;background:#c6c6c6"></i>
<i style="left:146.30px;top:152.15px;width:102.00px;height:0.70px;background:#c6c6c6"></i>
<i style="left:146.30px;top:165.47px;width:102.00px;height:1.25px;background:#a4a8ac"></i>
<b style="top:129px;color:#52657a;font-size:7.55px;left:151.40px;">Cox and Snell</b>
<b style="top:129px;color:#101216;font-size:7.55px;right:719.50px;text-align:right;">.025</b>
<b style="top:143px;color:#52657a;font-size:7.55px;left:151.40px;">Nagelkerke</b>
<b style="top:143px;color:#101216;font-size:7.55px;right:719.50px;text-align:right;">.028</b>
<b style="top:157px;color:#52657a;font-size:7.55px;left:151.40px;">McFadden</b>
<b style="top:157px;color:#101216;font-size:7.55px;right:719.50px;text-align:right;">.012</b>
<b style="top:169px;color:#101216;font-size:7.55px;left:151.50px;">Link function: Logit.</b>
<b style="top:200px;color:#000;font-size:9.30px;font-weight:bold;transform:scaleY(1.06);left:278.70px;width:200px;text-align:center;">Parameter Estimates</b>
<i style="left:146.30px;top:241.30px;width:139.60px;height:96.10px;background:#e0e0e0"></i>
<i style="left:328.95px;top:214.50px;width:0.70px;height:122.90px;background:#e9e9e9"></i>
<i style="left:372.85px;top:214.50px;width:0.70px;height:122.90px;background:#e9e9e9"></i>
<i style="left:414.25px;top:214.50px;width:0.70px;height:122.90px;background:#e9e9e9"></i>
<i style="left:456.05px;top:214.50px;width:0.70px;height:122.90px;background:#e9e9e9"></i>
<i style="left:497.95px;top:214.50px;width:0.70px;height:122.90px;background:#e9e9e9"></i>
<i style="left:555.65px;top:228.40px;width:0.70px;height:109.00px;background:#e9e9e9"></i>
<i style="left:146.30px;top:240.68px;width:467.50px;height:1.25px;background:#a4a8ac"></i>
<i style="left:146.30px;top:336.88px;width:467.50px;height:1.25px;background:#a4a8ac"></i>
<i style="left:192.80px;top:254.20px;width:421.00px;height:0.70px;background:#c6c6c6"></i>
<i style="left:146.30px;top:268.45px;width:467.50px;height:0.70px;background:#c6c6c6"></i>
<i style="left:192.80px;top:282.20px;width:421.00px;height:0.70px;background:#c6c6c6"></i>
<i style="left:192.80px;top:295.95px;width:421.00px;height:0.70px;background:#c6c6c6"></i>
<i style="left:192.80px;top:309.70px;width:421.00px;height:0.70px;background:#c6c6c6"></i>
<i style="left:192.80px;top:323.45px;width:421.00px;height:0.70px;background:#c6c6c6"></i>
<b style="top:230px;color:#52657a;font-size:7.55px;left:206.80px;width:200px;text-align:center;">Estimate</b>
<b style="top:230px;color:#52657a;font-size:7.55px;left:250.45px;width:200px;text-align:center;">Std. Error</b>
<b style="top:230px;color:#52657a;font-size:7.55px;left:293.10px;width:200px;text-align:center;">Wald</b>
<b style="top:230px;color:#52657a;font-size:7.55px;left:334.70px;width:200px;text-align:center;">df</b>
<b style="top:230px;color:#52657a;font-size:7.55px;left:376.55px;width:200px;text-align:center;">Sig.</b>
<b style="top:230px;color:#52657a;font-size:7.55px;left:426.35px;width:200px;text-align:center;">Lower Bound</b>
<b style="top:230px;color:#52657a;font-size:7.55px;left:484.10px;width:200px;text-align:center;">Upper Bound</b>
<b style="top:217px;color:#52657a;font-size:7.55px;left:454.80px;width:200px;text-align:center;">99% Confidence Interval</b>
<b style="top:245px;color:#585e68;font-size:7.68px;left:151.60px;">Threshold</b>
<b style="top:245px;color:#585e68;font-size:7.68px;left:198.00px;">[TingkatKepuasaan = 1]</b>
<b style="top:245px;color:#101216;font-size:7.55px;right:638.30px;text-align:right;">-.505</b>
<b style="top:245px;color:#101216;font-size:7.55px;right:594.40px;text-align:right;">.140</b>
<b style="top:245px;color:#101216;font-size:7.55px;right:553.00px;text-align:right;">12.962</b>
<b style="top:245px;color:#101216;font-size:7.55px;right:511.20px;text-align:right;">1</b>
<b style="top:245px;color:#101216;font-size:7.55px;right:469.30px;text-align:right;">.000</b>
<b style="top:245px;color:#101216;font-size:7.55px;right:411.60px;text-align:right;">-.867</b>
<b style="top:245px;color:#101216;font-size:7.55px;right:353.80px;text-align:right;">-.144</b>
<b style="top:259px;color:#585e68;font-size:7.68px;left:198.00px;">[TingkatKepuasaan = 2]</b>
<b style="top:259px;color:#101216;font-size:7.55px;right:638.30px;text-align:right;">.628</b>
<b style="top:259px;color:#101216;font-size:7.55px;right:594.40px;text-align:right;">.141</b>
<b style="top:259px;color:#101216;font-size:7.55px;right:553.00px;text-align:right;">19.934</b>
<b style="top:259px;color:#101216;font-size:7.55px;right:511.20px;text-align:right;">1</b>
<b style="top:259px;color:#101216;font-size:7.55px;right:469.30px;text-align:right;">.000</b>
<b style="top:259px;color:#101216;font-size:7.55px;right:411.60px;text-align:right;">.266</b>
<b style="top:259px;color:#101216;font-size:7.55px;right:353.80px;text-align:right;">.991</b>
<b style="top:273px;color:#585e68;font-size:7.68px;left:151.60px;">Location</b>
<b style="top:273px;color:#585e68;font-size:7.68px;left:198.00px;">dTowerBlock</b>
<b style="top:273px;color:#101216;font-size:7.55px;right:638.30px;text-align:right;">.416</b>
<b style="top:273px;color:#101216;font-size:7.55px;right:594.40px;text-align:right;">.187</b>
<b style="top:273px;color:#101216;font-size:7.55px;right:553.00px;text-align:right;">4.951</b>
<b style="top:273px;color:#101216;font-size:7.55px;right:511.20px;text-align:right;">1</b>
<b style="top:273px;color:#101216;font-size:7.55px;right:469.30px;text-align:right;">.026</b>
<b style="top:273px;color:#101216;font-size:7.55px;right:411.60px;text-align:right;">-.066</b>
<b style="top:273px;color:#101216;font-size:7.55px;right:353.80px;text-align:right;">.898</b>
<b style="top:286px;color:#585e68;font-size:7.68px;left:198.00px;">dApartement</b>
<b style="top:286px;color:#101216;font-size:7.55px;right:638.30px;text-align:right;">-.072</b>
<b style="top:286px;color:#101216;font-size:7.55px;right:594.40px;text-align:right;">.173</b>
<b style="top:286px;color:#101216;font-size:7.55px;right:553.00px;text-align:right;">.174</b>
<b style="top:286px;color:#101216;font-size:7.55px;right:511.20px;text-align:right;">1</b>
<b style="top:286px;color:#101216;font-size:7.55px;right:469.30px;text-align:right;">.676</b>
<b style="top:286px;color:#101216;font-size:7.55px;right:411.60px;text-align:right;">-.518</b>
<b style="top:286px;color:#101216;font-size:7.55px;right:353.80px;text-align:right;">.373</b>
<b style="top:300px;color:#585e68;font-size:7.68px;left:198.00px;">dKontak</b>
<b style="top:300px;color:#101216;font-size:7.55px;right:638.30px;text-align:right;">-.100</b>
<b style="top:300px;color:#101216;font-size:7.55px;right:594.40px;text-align:right;">.171</b>
<b style="top:300px;color:#101216;font-size:7.55px;right:553.00px;text-align:right;">.345</b>
<b style="top:300px;color:#101216;font-size:7.55px;right:511.20px;text-align:right;">1</b>
<b style="top:300px;color:#101216;font-size:7.55px;right:469.30px;text-align:right;">.557</b>
<b style="top:300px;color:#101216;font-size:7.55px;right:411.60px;text-align:right;">-.541</b>
<b style="top:300px;color:#101216;font-size:7.55px;right:353.80px;text-align:right;">.340</b>
<b style="top:314px;color:#585e68;font-size:7.68px;left:198.00px;">dTowerBlock * dKontak</b>
<b style="top:314px;color:#101216;font-size:7.55px;right:638.30px;text-align:right;">.488</b>
<b style="top:314px;color:#101216;font-size:7.55px;right:594.40px;text-align:right;">.254</b>
<b style="top:314px;color:#101216;font-size:7.55px;right:553.00px;text-align:right;">3.695</b>
<b style="top:314px;color:#101216;font-size:7.55px;right:511.20px;text-align:right;">1</b>
<b style="top:314px;color:#101216;font-size:7.55px;right:469.30px;text-align:right;">.055</b>
<b style="top:314px;color:#101216;font-size:7.55px;right:411.60px;text-align:right;">-.166</b>
<b style="top:314px;color:#101216;font-size:7.55px;right:353.80px;text-align:right;">1.141</b>
<b style="top:328px;color:#585e68;font-size:7.68px;left:198.00px;">dApartement * dKontak</b>
<b style="top:328px;color:#101216;font-size:7.55px;right:638.30px;text-align:right;">.479</b>
<b style="top:328px;color:#101216;font-size:7.55px;right:594.40px;text-align:right;">.218</b>
<b style="top:328px;color:#101216;font-size:7.55px;right:553.00px;text-align:right;">4.818</b>
<b style="top:328px;color:#101216;font-size:7.55px;right:511.20px;text-align:right;">1</b>
<b style="top:328px;color:#101216;font-size:7.55px;right:469.30px;text-align:right;">.028</b>
<b style="top:328px;color:#101216;font-size:7.55px;right:411.60px;text-align:right;">-.083</b>
<b style="top:328px;color:#101216;font-size:7.55px;right:353.80px;text-align:right;">1.041</b>
<b style="top:340px;color:#101216;font-size:7.55px;left:151.50px;">Link function: Logit.</b>
<svg style="left:133.6px;top:268.6px" width="8.4" height="7.6" viewBox="0 0 8.4 7.6"><path d="M0.3 2.4H4.2V0.2L8.2 3.8L4.2 7.4V5.2H0.3z" fill="#e81123"/></svg>
<b style="top:371px;color:#000;font-size:9.30px;font-weight:bold;transform:scaleY(1.06);left:173.80px;width:200px;text-align:center;">Test of Parallel Lines<sup style="position:static;font-size:7.8px;vertical-align:3.4px;line-height:0">a</sup></b>
<i style="left:146.30px;top:410.20px;width:65.10px;height:27.20px;background:#e0e0e0"></i>
<i style="left:272.35px;top:386.20px;width:0.70px;height:51.20px;background:#e9e9e9"></i>
<i style="left:323.95px;top:386.20px;width:0.70px;height:51.20px;background:#e9e9e9"></i>
<i style="left:365.65px;top:386.20px;width:0.70px;height:51.20px;background:#e9e9e9"></i>
<i style="left:146.30px;top:409.52px;width:261.50px;height:1.35px;background:#74787e"></i>
<i style="left:146.30px;top:423.45px;width:261.50px;height:0.70px;background:#c6c6c6"></i>
<i style="left:146.30px;top:436.82px;width:261.50px;height:1.35px;background:#74787e"></i>
<b style="top:400px;color:#40546a;font-size:7.55px;left:151.30px;">Model</b>
<b style="top:389px;color:#40546a;font-size:7.55px;left:141.40px;width:200px;text-align:center;">-2 Log</b>
<b style="top:399px;color:#40546a;font-size:7.55px;left:141.40px;width:200px;text-align:center;">Likelihood</b>
<b style="top:400px;color:#40546a;font-size:7.55px;left:197.60px;width:200px;text-align:center;">Chi-Square</b>
<b style="top:400px;color:#40546a;font-size:7.55px;left:244.30px;width:200px;text-align:center;">df</b>
<b style="top:400px;color:#40546a;font-size:7.55px;left:285.40px;width:200px;text-align:center;">Sig.</b>
<b style="top:414px;color:#40546a;font-size:7.55px;left:151.40px;">Null Hypothesis</b>
<b style="top:414px;color:#101216;font-size:7.55px;right:694.70px;text-align:right;">77.342</b>
<b style="top:428px;color:#40546a;font-size:7.55px;left:151.40px;">General</b>
<b style="top:428px;color:#101216;font-size:7.55px;right:694.70px;text-align:right;">68.756</b>
<b style="top:428px;color:#101216;font-size:7.55px;right:643.60px;text-align:right;">8.586</b>
<b style="top:428px;color:#101216;font-size:7.55px;right:601.80px;text-align:right;">5</b>
<b style="top:428px;color:#101216;font-size:7.55px;right:559.60px;text-align:right;">.127</b>
<b style="top:439px;color:#101216;font-size:7.74px;left:151.50px;">The null hypothesis states that the location parameters (slope</b>
<b style="top:448px;color:#101216;font-size:7.78px;left:151.50px;">coefficients) are the same across response categories.</b>
<b style="top:461px;color:#101216;font-size:7.55px;left:161.80px;">a. Link function: Logit.</b></div>
<div id="sb" style="position:absolute;left:0;top:502.4px;width:960px;height:12.2px;background:linear-gradient(#dfe8f5,#e6eefa 25%,#e8f0fb 85%,#f6f9fe)">
<i style="position:absolute;left:2px;top:1px;width:0.8px;height:9px;background:#b9c6d8"></i>
<i style="position:absolute;left:713.6px;top:1px;width:0.8px;height:10px;background:#aebbd0"></i>
<i style="position:absolute;left:856.4px;top:1px;width:0.8px;height:10px;background:#aebbd0"></i>
<i style="position:absolute;left:869.2px;top:1px;width:0.8px;height:10px;background:#aebbd0"></i>
<i style="position:absolute;left:886.8px;top:1px;width:0.8px;height:10px;background:#aebbd0"></i>
<i style="position:absolute;left:937.8px;top:1px;width:0.8px;height:10px;background:#aebbd0"></i>
<span style="position:absolute;left:715.6px;top:1px;font-size:7.62px;line-height:10px;color:#222;white-space:nowrap">IBM SPSS Statistics Processor is ready</span>
<span style="position:absolute;left:889px;top:1px;font-size:7.62px;line-height:10px;color:#222;white-space:nowrap">Unicode:ON</span>
</div>

<div id="tk" style="position:absolute;left:0;top:514.5px;width:960px;height:25.5px;background:linear-gradient(90deg,#1b171b 0,#1b171b 6%,#1e1a1a 11%,#2b2723 13.5%,#3a362e 17%,#3a362e 25%,#35312c 30%,#3c3434 36%,#3e2d2d 42%,#3e2c2c 45%,#3b3230 50%,#433f38 55%,#423e37 60%,#3e3a34 70%,#322e29 80%,#2a2622 88%,#25211e 100%)">
<div style="position:absolute;left:63px;top:0;width:30.4px;height:25.4px;background:#4c474b"></div>
<!-- windows logo -->
<svg style="position:absolute;left:9.6px;top:7.8px" width="11.2" height="10" viewBox="0 0 11.2 10"><path d="M0 1.4L4.6 0.8V4.7H0zM5.3 0.7L11.2 0V4.7H5.3zM0 5.3H4.6V9.2L0 8.6zM5.3 5.3H11.2V10L5.3 9.3z" fill="#fff"/></svg>
<!-- explorer -->
<svg style="position:absolute;left:39.8px;top:6.6px" width="14.6" height="12" viewBox="0 0 14.6 12"><path d="M0.4 1.2Q0.4 0.3 1.3 0.3H5.4L6.6 1.6H13.4Q14.2 1.6 14.2 2.4V10.6H0.4z" fill="#f4c84a"/><path d="M0.4 3H14.2V10.8H0.4z" fill="#fbdc72"/><path d="M3 6H11.6V11.4H3z" fill="#3f8fd6"/><path d="M4.6 7.6H10V9.4H4.6z" fill="#cfe7fa"/><path d="M3 10.4H11.6V11.6H3z" fill="#2f6fb4"/></svg>
<!-- spss -->
<svg style="position:absolute;left:70.6px;top:5px" width="15.6" height="15.6" viewBox="0 0 15.6 15.6"><defs><radialGradient id="gs" cx="0.4" cy="0.3" r="0.8"><stop offset="0" stop-color="#8fc0ee"/><stop offset="0.5" stop-color="#3f82cc"/><stop offset="1" stop-color="#1f5aa6"/></radialGradient></defs><circle cx="7.8" cy="7.8" r="7.5" fill="url(#gs)"/><path d="M5 3.6L7.4 7.4M4.6 9.6H8.6" stroke="#e6f2fc" stroke-width="0.9" fill="none"/><circle cx="10.6" cy="6" r="1.1" fill="none" stroke="#cfe4f8" stroke-width="0.6"/><circle cx="10.8" cy="10.4" r="0.9" fill="none" stroke="#cfe4f8" stroke-width="0.6"/></svg>
<!-- whatsapp -->
<svg style="position:absolute;left:100.6px;top:4.6px" width="22" height="18.4" viewBox="0 0 22 18.4"><path d="M0.6 15.2L1.8 11.2A7.2 7.2 0 1 1 4.6 14z" fill="#fff"/><circle cx="7.9" cy="7.7" r="6.3" fill="#3fc351"/><path d="M5.6 4.2Q4.4 5 5.2 7Q6.6 10 9.6 11Q11 11.4 11.6 10L10 8.9L9.2 9.6Q7.6 8.8 6.8 7.2L7.4 6.4z" fill="#fff"/><circle cx="16.4" cy="13" r="5" fill="#2a2a2a" stroke="#cfcfcf" stroke-width="0.6"/><text x="16.4" y="15.3" font-family="Liberation Sans, sans-serif" font-size="6.2" font-weight="bold" fill="#fff" text-anchor="middle">23</text></svg>
<i style="position:absolute;left:34.6px;top:23.9px;width:25px;height:1.5px;background:#d9dade"></i>
<i style="position:absolute;left:63px;top:23.9px;width:30.4px;height:1.5px;background:#d9dade"></i>
<i style="position:absolute;left:96.8px;top:23.9px;width:25px;height:1.5px;background:#d9dade"></i>
<!-- tray -->
<svg style="position:absolute;left:828.6px;top:10.6px" width="7" height="4.2" viewBox="0 0 7 4.2"><path d="M0.4 3.8L3.5 0.6L6.6 3.8" fill="none" stroke="#f2f2f2" stroke-width="0.8"/></svg>
<svg style="position:absolute;left:842.6px;top:10px" width="11" height="5.6" viewBox="0 0 11 5.6"><rect x="0.4" y="0.4" width="9" height="4.8" fill="none" stroke="#f2f2f2" stroke-width="0.8"/><rect x="1.4" y="1.4" width="6" height="2.8" fill="#f2f2f2"/><rect x="9.6" y="1.8" width="1.1" height="2" fill="#f2f2f2"/></svg>
<svg style="position:absolute;left:858.6px;top:8.6px" width="8" height="8" viewBox="0 0 8 8"><path d="M1 7.6A6.6 6.6 0 0 1 7.6 1" fill="none" stroke="#bdbdbd" stroke-width="0.8"/><path d="M3 7.6A4.6 4.6 0 0 1 7.6 3" fill="none" stroke="#bdbdbd" stroke-width="0.8"/><path d="M5 7.6A2.6 2.6 0 0 1 7.6 5" fill="none" stroke="#bdbdbd" stroke-width="0.8"/><circle cx="7" cy="7.2" r="0.8" fill="#e8e8e8"/></svg>
<svg style="position:absolute;left:872.6px;top:9.2px" width="10.4" height="6.6" viewBox="0 0 10.4 6.6"><path d="M0.4 2.2H1.8L3.8 0.4V6.2L1.8 4.4H0.4z" fill="none" stroke="#ededed" stroke-width="0.7"/><path d="M6.2 1.8L9.6 5M9.6 1.8L6.2 5" stroke="#ededed" stroke-width="0.75"/></svg>
<span style="position:absolute;left:890.6px;top:2.6px;font-size:7.3px;line-height:10px;color:#fff;white-space:nowrap">12:27 AM</span>
<span style="position:absolute;left:891.8px;top:13.6px;font-size:7.3px;line-height:10px;color:#fff;white-space:nowrap">9/4/2023</span>
<svg style="position:absolute;left:934.6px;top:7.4px" width="10.4" height="10.6" viewBox="0 0 10.4 10.6"><path d="M0.5 0.5H9.9V7.6H6.6L5.2 9.6L3.8 7.6H0.5z" fill="none" stroke="#f2f2f2" stroke-width="0.85"/></svg>
</div>

</div></body></html>
